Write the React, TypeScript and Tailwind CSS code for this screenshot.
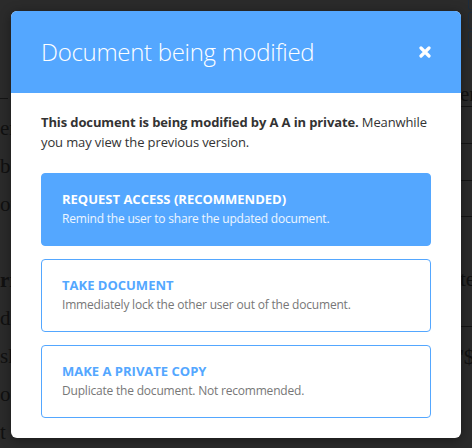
import { FunctionComponent } from "react";

const options = [
  {
    title: "REQUEST ACCESS (RECOMMENDED)",
    text: "Remind the user to share the updated document.",
    primary: true,
  },
  {
    title: "TAKE DOCUMENT",
    text: "Immediately lock the other user out of the document.",
    primary: false,
  },
  {
    title: "MAKE A PRIVATE COPY",
    text: "Duplicate the document. Not recommended.",
    primary: false,
  },
];

const CloseIcon: FunctionComponent = () => (
  <svg width="12" height="12" viewBox="0 0 12 12" aria-hidden="true">
    <path d="M2 2 L10 10 M10 2 L2 10" stroke="white" strokeWidth="3.2" strokeLinecap="round" />
  </svg>
);

const App: FunctionComponent = () => {
  return (
    <div className="relative w-full h-[448px] overflow-hidden bg-[#2b2b2b] font-['Liberation_Serif',serif] text-[#111] text-[21px]">
      {/* dimmed document behind the dialog */}
      <div className="flex flex-row justify-between h-full">
        <div className="w-[14px] overflow-hidden whitespace-nowrap pt-[98px]">
          <div className="w-[8px] border-t border-[#151515]" />
          <div className="leading-[38px] mt-[10px]">
            <div>ement</div>
            <div>be</div>
            <div>or</div>
            <div>&nbsp;</div>
            <div className="font-bold">rr</div>
            <div>d</div>
            <div>sh</div>
            <div>o</div>
            <div>t</div>
          </div>
        </div>
        <div className="w-[14px] overflow-hidden whitespace-nowrap flex flex-col items-end">
          <div className="flex flex-col gap-[2px] mt-[-2px] mr-[-8px]">
            <div className="w-[12px] h-[12px] border border-[#1d2b3b] rounded-[2px]" />
            <div className="w-[12px] h-[17px] border border-[#1d2b3b] rounded-[2px]" />
            <div className="w-[12px] h-[17px] border border-[#1d2b3b] rounded-[2px]" />
          </div>
          <div className="w-full pl-[2px] mt-[34px] leading-[24px]">er</div>
          <div className="w-full border-t border-[#151515] h-[37px]" />
          <div className="w-full border-t border-[#151515] h-[37px]" />
          <div className="w-full border-t border-[#151515] h-[36px]" />
          <div className="w-full border-t border-[#151515] h-[110px] pl-[2px] pt-[50px] leading-[24px]">te</div>
          <div className="w-full border-t border-[#151515] pl-[2px] pt-[18px] leading-[24px]">'$</div>
        </div>
      </div>

      {/* dialog */}
      <div className="absolute inset-0 flex items-center justify-center">
        <div className="w-[450px] rounded-[6px] overflow-hidden bg-white font-['Open_Sans',sans-serif] shadow-[0_2px_12px_rgba(0,0,0,0.4)]">
          <div className="h-[82px] bg-[#54a7ff] flex flex-row items-center justify-between pl-[30px] pr-[30px]">
            <h1 className="text-[24px] font-light text-white leading-[32px] tracking-[-0.3px]">
              Document being modified
            </h1>
            <CloseIcon />
          </div>
          <div className="px-[30px] pt-[19px] pb-5">
            <p className="text-[13px] leading-[20px] text-[#333] tracking-[-0.12px]">
              <b className="font-bold">This document is being modified by A A in private.</b>{" "}
              Meanwhile you may view the previous version.
            </p>
            <div className="mt-[21px] flex flex-col gap-[13px]">
              {options.map((o) => (
                <button
                  key={o.title}
                  className={
                    o.primary
                      ? "h-[73px] rounded-[4px] bg-[#54a7ff] border border-[#54a7ff] text-left px-5 flex flex-col justify-center"
                      : "h-[73px] rounded-[4px] bg-white border border-[#54a7ff] text-left px-5 flex flex-col justify-center"
                  }
                >
                  <span
                    className={
                      o.primary
                        ? "text-[13px] font-bold leading-[20px] text-white"
                        : "text-[13px] font-bold leading-[20px] text-[#54a7ff]"
                    }
                  >
                    {o.title}
                  </span>
                  <span
                    className={
                      o.primary
                        ? "text-[12px] leading-[20px] tracking-[-0.2px] text-white/90"
                        : "text-[12px] leading-[20px] tracking-[-0.2px] text-[#777]"
                    }
                  >
                    {o.text}
                  </span>
                </button>
              ))}
            </div>
          </div>
        </div>
      </div>
    </div>
  );
};

export default App;
